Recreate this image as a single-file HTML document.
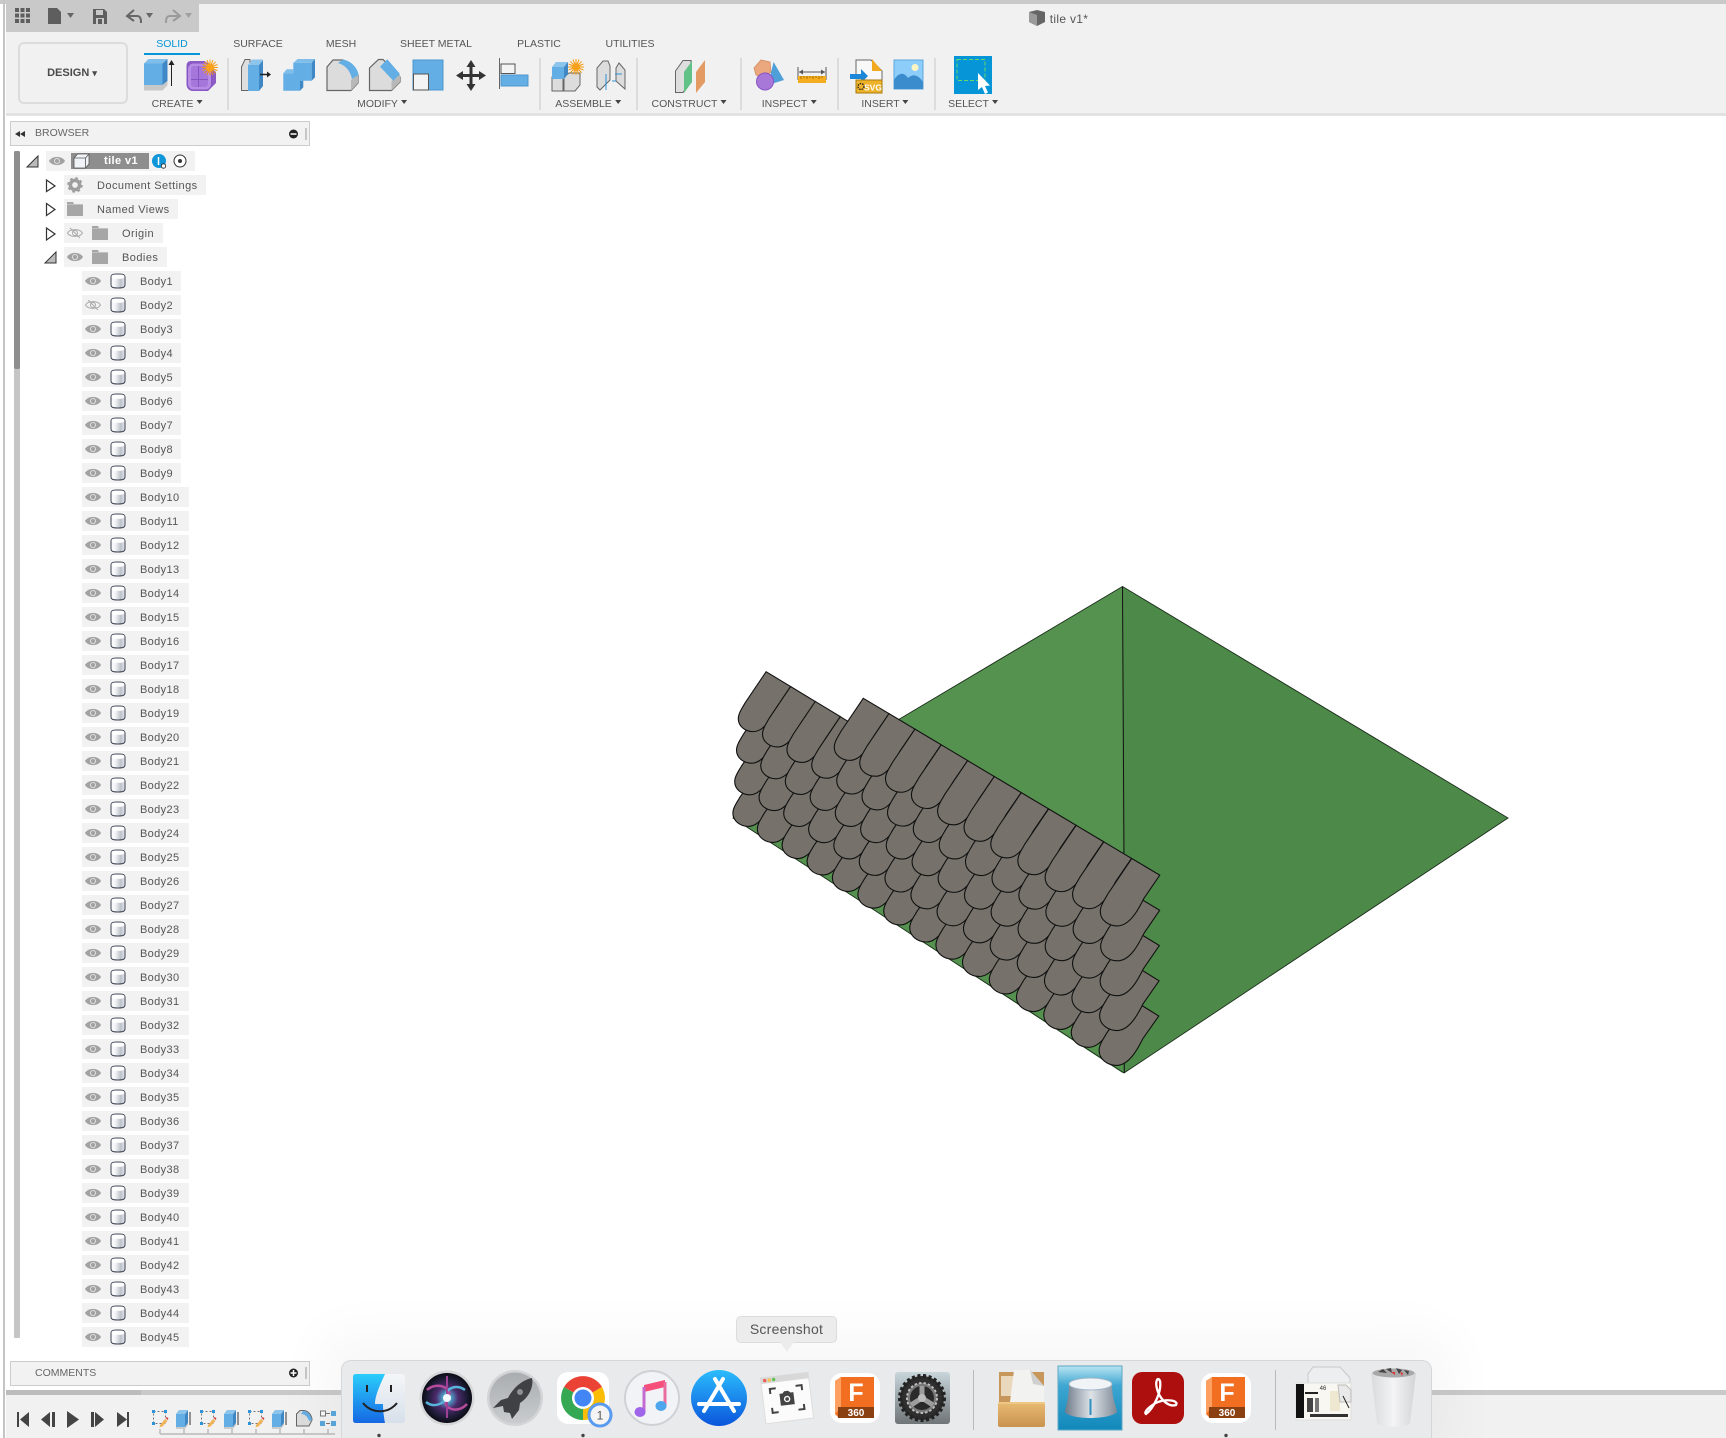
<!DOCTYPE html>
<html><head><meta charset="utf-8"><title>tile v1</title>
<style>
html,body{margin:0;padding:0;background:#fff;width:1726px;height:1438px;overflow:hidden;font-family:"Liberation Sans",sans-serif;color:#555}
#p{position:absolute;left:0;top:0;width:1726px;height:1438px;overflow:hidden}
.a{position:absolute}
svg{display:block}
.t{position:absolute;font-size:11px;line-height:14px;transform:translateX(-50%);white-space:nowrap;color:#555}
.lb{position:absolute;font-size:10.5px;line-height:14px;top:97px;transform:translateX(-50%);white-space:nowrap;color:#555}
.lb:after{content:"";display:inline-block;margin-left:3px;border:3px solid transparent;border-top:4px solid #444;border-bottom:0;vertical-align:3px}
.tr{position:absolute;background:#f2f2f2;height:20px;line-height:20px;font-size:11px;letter-spacing:.45px;color:#555;white-space:nowrap}
.tr span{top:1px}
.rows{position:absolute;left:82px;top:271px}
.rows p{position:relative;margin:0 0 4px;height:20px;width:99px;background:#f2f2f2;font-size:11px;line-height:20px;letter-spacing:.35px;padding-left:0;color:#555}
.rows p.w{width:107px}
.rows p span{position:absolute;left:58px;top:.5px}
.rows svg{position:absolute}
.rows .e{left:3px;top:5px}
.rows .c{left:28px;top:2px}
</style></head><body><div id="p">

<!-- toolbar background -->
<div class="a" style="left:0;top:0;width:1726px;height:4px;background:#c9c9c9"></div>
<div class="a" style="left:3px;top:0;width:2px;height:1438px;background:#c4c4c4"></div>
<div class="a" style="left:6px;top:4px;width:1720px;height:109px;background:#f1f1f1;border-bottom:3px solid #e2e2e2"></div>
<div class="a" style="left:6px;top:4px;width:193px;height:28px;background:#c9c9c9"></div>
<div class="a" style="left:199px;top:4px;width:20px;height:28px;background:#f1f1f1;border-top-left-radius:7px"></div>

<div class="a" style="left:18px;top:42px;width:106px;height:58px;border:2px solid #dcdcdc;border-radius:6px"></div>
<div class="t" style="left:72px;top:66px;font-weight:bold;font-size:11px;color:#4a4a4a">DESIGN&nbsp;<span style="font-size:9px">▾</span></div>

<div class="t" style="left:172px;top:36.500px;color:#0696d7;font-size:10.5px">SOLID</div>
<div class="a" style="left:144px;top:53px;width:56px;height:2px;background:#0696d7"></div>
<div class="t" style="left:258px;top:36.500px;font-size:10.5px">SURFACE</div>
<div class="t" style="left:341px;top:36.500px;font-size:10.5px">MESH</div>
<div class="t" style="left:436px;top:36.500px;font-size:10.5px">SHEET METAL</div>
<div class="t" style="left:539px;top:36.500px;font-size:10.5px">PLASTIC</div>
<div class="t" style="left:630px;top:36.500px;font-size:10.5px">UTILITIES</div>

<div class="lb" style="left:177px">CREATE</div>
<div class="lb" style="left:382px">MODIFY</div>
<div class="lb" style="left:588px">ASSEMBLE</div>
<div class="lb" style="left:689px">CONSTRUCT</div>
<div class="lb" style="left:789px">INSPECT</div>
<div class="lb" style="left:885px">INSERT</div>
<div class="lb" style="left:973px">SELECT</div>

<div class="t" style="left:1069px;top:11.500px;font-size:12px;letter-spacing:.3px;color:#555">tile v1*</div>

<!-- main drawing layer -->
<svg class="a" style="left:0;top:0" width="1726" height="1438" viewBox="0 0 1726 1438">
<defs>
<path id="sh" d="M0 0L28 16.700 12 40C8 48-1 67.400-14.600 67.400-23 67.400-31.500 62-31.500 53-31.500 47-27 41-24 35.500Z" fill="#76726b" stroke="#111" stroke-width="1.100" vector-effect="non-scaling-stroke"/>
<g id="ra">
<use href="#sh" transform="translate(863.3 698.3) scale(.921)"/>
<use href="#sh" transform="translate(889 713.6) scale(.929)"/>
<use href="#sh" transform="translate(915 729.1) scale(.937)"/>
<use href="#sh" transform="translate(941.2 744.8) scale(.945)"/>
<use href="#sh" transform="translate(967.6 760.6) scale(.953)"/>
<use href="#sh" transform="translate(994.3 776.5) scale(.961)"/>
<use href="#sh" transform="translate(1021.3 792.6) scale(.969)"/>
<use href="#sh" transform="translate(1048.6 808.9) scale(.976)"/>
<use href="#sh" transform="translate(1076.1 825.3) scale(.984)"/>
<use href="#sh" transform="translate(1103.8 841.8) scale(.992)"/>
<use href="#sh" transform="translate(1131.8 858.5)"/>
</g>
<g id="rb">
<use href="#sh" transform="translate(763.1 638.5) scale(.89)"/>
<use href="#sh" transform="translate(787.75 653.2) scale(.898)"/>
<use href="#sh" transform="translate(812.65 668) scale(.906)"/>
<use href="#sh" transform="translate(837.85 683.1) scale(.914)"/>
<use href="#ra"/>
</g>
<linearGradient id="cylg" x1="0" x2="1" y1="0" y2="0"><stop offset="0" stop-color="#fdfdfe"/><stop offset=".3" stop-color="#f4f5f7"/><stop offset=".7" stop-color="#bcc1ca"/><stop offset="1" stop-color="#e6e8ec"/></linearGradient>
<g id="star"><g stroke="#f59a0c" stroke-width="1"><path d="M-8 0H8M0-8V8M-5.700-5.700 5.700 5.700M-5.700 5.700 5.700-5.700M-7.400-3 7.400 3M-7.400 3 7.400-3M-3-7.400 3 7.400M3-7.400-3 7.400"/></g><circle r="4" fill="#f9a11b"/></g>
<g id="folder"><path d="M0 1H6L7 3H16V15H0Z" fill="#a6a6a6"/><path d="M0 3.500H16" stroke="#c8c8c8" stroke-width=".8"/></g>
<g id="teye"><path d="M0 5C3-.5 13-.5 16 5 13 10.500 3 10.500 0 5Z" fill="#a2a2a2"/><circle cx="8" cy="5" r="3" fill="#e4e4e4"/><circle cx="8" cy="5" r="2.100" fill="#a2a2a2"/></g>
<g id="sk"><rect x="1.500" y="1.500" width="12" height="12" fill="none" stroke="#777" stroke-dasharray="2 2"/><path d="M0 0h3v3h-3zM12 0h3v3h-3zM0 12h3v3h-3z" fill="#2d94d9"/><path d="M8 15l5-6 2.500 2-5 5.500-3 .8z" fill="#f1b35a"/><path d="M13.500 8l2 2 1-1.400-1.600-1.600z" fill="#d6423a"/></g>
<g id="ext"><path d="M0 4H9V17H0Z" fill="#62aee5"/><path d="M9 4 12 0V13L9 17Z" fill="#3f88c5"/><path d="M0 4 3 0H12L9 4Z" fill="#8cc4ec"/><path d="M0 17H9L12 13V15L9 19H0Z" fill="#ccc"/><path d="M14 2V15" stroke="#333" stroke-width="1"/></g>
<g id="f360">
<rect x="0" y="0" width="50" height="50" rx="12" fill="#fff"/>
<path d="M5 8 11 4H44V45H9L5 41Z" fill="#f26f22"/>
<path d="M5 8 11 4V34L5 41Z" fill="#ffa063"/>
<path d="M8 34H44V45H8Z" fill="#8a4011"/>
<text x="26" y="28" font-family="Liberation Sans" font-weight="bold" font-size="25" fill="#fff" text-anchor="middle">F</text>
<text x="26" y="43" font-family="Liberation Sans" font-weight="bold" font-size="10" fill="#fff" text-anchor="middle">360</text>
</g>
<linearGradient id="fb" x1="0" x2="0" y1="0" y2="1"><stop offset="0" stop-color="#2bcdfb"/><stop offset="1" stop-color="#1668e3"/></linearGradient>
<linearGradient id="fw" x1="0" x2="0" y1="0" y2="1"><stop offset="0" stop-color="#f4f6f8"/><stop offset="1" stop-color="#d6e0ea"/></linearGradient>
<radialGradient id="siri"><stop offset="0" stop-color="#cfeefa"/><stop offset=".15" stop-color="#4ea8cf"/><stop offset=".45" stop-color="#4c2a6c"/><stop offset=".8" stop-color="#1b1b33"/><stop offset="1" stop-color="#0b0b15"/></radialGradient>
<linearGradient id="lp" x1="0" x2="0" y1="0" y2="1"><stop offset="0" stop-color="#a9adb0"/><stop offset="1" stop-color="#c9cccd"/></linearGradient>
<linearGradient id="app" x1="0" x2="0" y1="0" y2="1"><stop offset="0" stop-color="#2bbcfc"/><stop offset="1" stop-color="#0b55dc"/></linearGradient>
<linearGradient id="sys" x1="0" x2="0" y1="0" y2="1"><stop offset="0" stop-color="#c8d6dc"/><stop offset="1" stop-color="#6f7477"/></linearGradient>
<linearGradient id="blu" x1="0" x2="0" y1="0" y2="1"><stop offset="0" stop-color="#b8e4f2"/><stop offset=".3" stop-color="#3fa7d2"/><stop offset="1" stop-color="#1088bb"/></linearGradient>
<linearGradient id="kn" x1="0" x2="1" y1="0" y2="0"><stop offset="0" stop-color="#6f7b8a"/><stop offset=".5" stop-color="#dfe3e8"/><stop offset="1" stop-color="#7e8997"/></linearGradient>
<linearGradient id="tan" x1="0" x2="0" y1="0" y2="1"><stop offset="0" stop-color="#e9bb73"/><stop offset="1" stop-color="#c9934f"/></linearGradient>
<linearGradient id="trs" x1="0" x2="1" y1="0" y2="0"><stop offset="0" stop-color="#d8dadb"/><stop offset=".5" stop-color="#f4f4f5"/><stop offset="1" stop-color="#d2d4d6"/></linearGradient>
</defs>

<!-- 3D model -->
<path d="M1122.500 586.500 1508 818 1124 1073 733 818Z" fill="#4e8b4a"/>
<path d="M1122.500 586.500V1073L733 818Z" fill="#55924f"/>
<path d="M1124 845 1124 1073 1158 1050 1508 818 1122.500 586.500Z" fill="#4d8a49"/>
<path d="M1122.500 586.500 1508 818 1124 1073 733 818Z" fill="none" stroke="#1c2e1c" stroke-width=".9"/>
<path d="M1122.500 586.500 1124 860M1124.300 1060V1073" stroke="#111" stroke-width="1"/>
<use href="#rb" transform="matrix(1.0027 .0317 0 1 -4.16 104.11)"/>
<use href="#rb" transform="matrix(.9992 .0228 0 1 .21 79.2)"/>
<use href="#rb" transform="matrix(.99566 .01383 0 1 4.61 54.35)"/>
<use href="#rb" transform="matrix(.99214 .00488 0 1 9 29.48)"/>
<use href="#ra"/>

<!-- QAT icons -->
<path d="M15 8h4v4h-4zM20.500 8h4v4h-4zM26 8h4v4h-4zM15 13.500h4v4h-4zM20.500 13.500h4v4h-4zM26 13.500h4v4h-4zM15 19h4v4h-4zM20.500 19h4v4h-4zM26 19h4v4h-4z" fill="#5e5e5e"/>
<path d="M48 8H57L61 12V24H48Z" fill="#5e5e5e"/>
<path d="M67 13H74L70.500 18Z" fill="#666"/>
<path d="M93 9H104L107 12V24H93Z" fill="#5e5e5e"/><path d="M96 10H103V15H96ZM96 18H104V24H96Z" fill="#c9c9c9"/><path d="M98 19H102V24H98Z" fill="#5e5e5e"/>
<path d="M134 10 127 16 134 21M127 16H137C141 16 141 20 141 23" fill="none" stroke="#666" stroke-width="2"/>
<path d="M146 13H153L149.500 18Z" fill="#666"/>
<path d="M173 10 180 16 173 21M180 16H170C166 16 166 20 166 23" fill="none" stroke="#9a9a9a" stroke-width="2"/>
<path d="M185 13H192L188.500 18Z" fill="#a0a0a0"/>
<path d="M1029 12 1037 10 1045 12V22L1037 26 1029 22Z" fill="#666"/><path d="M1029 12 1037 15V26L1029 22Z" fill="#9a9a9a"/>

<!-- separators -->
<path d="M228 58V110M540 58V110M637 58V110M741 58V110M838 58V110M935 58V110" stroke="#dcdcdc" stroke-width="2"/>

<!-- Extrude -->
<path d="M144 63.500H162.500V85H144Z" fill="#62aee5"/><path d="M162.500 63.500 167.500 59V81L162.500 85Z" fill="#3f88c5"/><path d="M144 63.500 148.500 59H167.500L162.500 63.500Z" fill="#7fbdea"/><path d="M144 85H162.500L167.500 81V85L162.500 90.500H144Z" fill="#c8c8c8"/>
<path d="M171.500 86V62" stroke="#222" stroke-width="1"/><path d="M168.500 65 171.500 60 174.500 65Z" fill="#222"/>
<!-- Form -->
<path d="M191 61H205L216 72V83L208 91H193C189 91 186.500 88 186.500 84V66C186.500 63 188 61 191 61Z" fill="#8a5cc4"/>
<rect x="187.500" y="63" width="24" height="27" rx="6" fill="#b68ce4" stroke="#8654c5" stroke-width="1"/><rect x="191" y="66" width="17" height="21" rx="3" fill="#a577da"/><path d="M191 79.500H208M198.500 66V87" stroke="#8654c5" stroke-width="1"/>
<use href="#star" transform="translate(210 67.500)"/>
<!-- Press pull -->
<path d="M241.500 67 245 59.500H250V90.500H241.500Z" fill="#dedede" stroke="#666"/>
<path d="M248 65H259V91H248Z" fill="#62aee5"/><path d="M259 65 263 60V86L259 91Z" fill="#3f88c5"/><path d="M248 65 252 59.500H263L259 65Z" fill="#8cc4ec"/>
<path d="M260 74.500H268" stroke="#222" stroke-width="1.500"/><path d="M267 71.500 271 74.500 267 77.500Z" fill="#222"/>
<!-- Combine -->
<path d="M293.300 62.700H311.700V80.700H293.300Z" fill="#62aee5"/><path d="M283.300 73.300H300V90.700H283.300Z" fill="#62aee5"/>
<path d="M293.300 62.700 297.700 59H315L311.700 62.700Z" fill="#7fbdea"/><path d="M311.700 62.700 315 59V77.300L311.700 80.700Z" fill="#3f88c5"/>
<path d="M283.300 73.300 286.700 69.300H293.300V73.300Z" fill="#7fbdea"/><path d="M300 90.700 303.300 87.300V80.700H300Z" fill="#3f88c5"/>
<!-- Fillet -->
<path d="M327 90.500V67L333 60H343L358 75V83L351 90.500Z" fill="#dcdcdc" stroke="#666" stroke-width="1.200"/>
<path d="M351 90.500V80L358 75V83Z" fill="#b8b8b8"/>
<path d="M338 63 343 59.500C352 61 358 69 358.500 75L352 79C350 70 345 65 338 63Z" fill="#62aee5"/>
<!-- Chamfer -->
<path d="M369.500 90.500V68L378.500 59.500H383L400 77V82L391.500 90.500Z" fill="#dcdcdc" stroke="#666" stroke-width="1.200"/>
<path d="M391.500 90.500V81L400 75V82Z" fill="#b8b8b8"/>
<path d="M380 66.700 387.300 59.300 400 74 393.300 80.700Z" fill="#62aee5"/>
<!-- Shell -->
<rect x="413" y="60" width="30" height="30" fill="#62aee5" stroke="#4e97d0"/><rect x="413.500" y="74" width="15" height="16" fill="#f4f4f4" stroke="#555"/>
<!-- Move -->
<path d="M471 60 475.500 67H472.500V74H479V71L486 75.500 479 80V77H472.500V84H475.500L471 91 466.500 84H469.500V77H463V80L456 75.500 463 71V74H469.500V67H466.500Z" fill="#333"/>
<!-- Align -->
<path d="M499.500 58V89" stroke="#666"/><rect x="501" y="64" width="14" height="9.500" fill="#f4f4f4" stroke="#555"/><rect x="501" y="75" width="27" height="11" fill="#62aee5" stroke="#4e97d0"/>
<!-- New component -->
<path d="M552 77V91H563V77ZM564 77V91H575L580 85V73H569Z" fill="#dcdcdc" stroke="#666"/>
<path d="M552 67H564V79H552Z" fill="#62aee5"/><path d="M552 67 556 62H568L564 67Z" fill="#8cc4ec"/><path d="M564 67 568 62V74L564 79Z" fill="#3f88c5"/>
<use href="#star" transform="translate(576 67)"/>
<!-- Joint -->
<path d="M597 87V68L603 61H608L610 66V80L600 90Z" fill="#dcdcdc" stroke="#666"/>
<path d="M619 63 625 70V89L616 81V68Z" fill="#dcdcdc" stroke="#666"/>
<path d="M606 74V90M612 81H616" stroke="#2d94d9" stroke-width="1"/><path d="M615 74H622" stroke="#2d94d9"/>
<!-- Construct -->
<path d="M675.500 71 683 60.500H691V81L683 92.500H675.500Z" fill="#dedede" stroke="#666"/>
<path d="M684 72 692 61V82L684 93Z" fill="#62c186"/>
<path d="M696 72 705 60V82L696 93Z" fill="#e39a63"/>
<!-- Inspect -->
<path d="M754 68 761 60 770 62 771 72 764 77 756 75Z" fill="#eba77e" stroke="#d18c60" stroke-width=".8"/>
<path d="M773.600 62 784 80 768 85Z" fill="#4f9fd8"/>
<circle cx="765" cy="81.500" r="8.500" fill="#a878d8" stroke="#8654c5"/>
<!-- Measure -->
<path d="M798 67V80M826 67V80" stroke="#555"/><path d="M799 72H825" stroke="#555"/><path d="M799 72 803 69.500V74.500ZM825 72 821 69.500V74.500Z" fill="#555"/>
<rect x="798" y="76" width="28" height="7" fill="#f4ad1e"/><path d="M801 76v3M804 76v2M807 76v3M810 76v2M813 76v3M816 76v2M819 76v3M822 76v2" stroke="#8a5a00" stroke-width=".7"/>
<!-- Insert svg -->
<path d="M856 76V60H871L882 71V82" fill="#f8f8f8" stroke="#666"/><path d="M872 59 882 71H872Z" fill="#f2a91f"/>
<path d="M850 74H861V69L868 76 861 83V79H850Z" fill="#1c86d8"/>
<rect x="856" y="80" width="26" height="13" fill="#eeb12a" stroke="#a77a10"/>
<text x="873" y="90.500" font-family="Liberation Sans" font-weight="bold" font-size="8.500" fill="#fff" text-anchor="middle">SVG</text>
<circle cx="861" cy="86.500" r="3" fill="none" stroke="#222" stroke-width="1.300" stroke-dasharray="1.500 1"/>
<!-- Insert image -->
<rect x="894" y="60" width="29" height="29" fill="#8ccdfa" stroke="#5ba8de"/><path d="M894 89V80C899 72 904 72 908 78 912 74 918 74 923 82V89Z" fill="#3a8ccd"/><circle cx="915" cy="67.500" r="3.500" fill="#fdf5c4"/>
<!-- Select -->
<rect x="954" y="56" width="38" height="38" fill="#0696d7"/><rect x="957" y="59.500" width="28" height="21" fill="none" stroke="#64d86c" stroke-width="1" stroke-dasharray="4 2"/>
<path d="M978 73 978 90 982 87 985 94 988 92.500 985 86 990 85.500Z" fill="#fff"/>

<!-- browser panel glyphs -->
<rect x="10.500" y="121.500" width="299" height="24" fill="#f2f2f2" stroke="#ccc"/>
<path d="M20 131 15 134 20 137ZM25 131 20 134 25 137Z" fill="#333"/>
<circle cx="293.500" cy="134" r="4.500" fill="#222"/><path d="M290.500 134H296.500" stroke="#fff" stroke-width="1.500"/>
<path d="M306 128V140" stroke="#999" stroke-width="1"/>
<!-- scrollbar -->
<rect x="14" y="151" width="6" height="1187" rx="1" fill="#c6c6c6"/><rect x="14" y="151" width="6" height="218" rx="2" fill="#8e8e8e"/>

<!-- tree triangles -->
<path d="M27 167 38 156V167Z" fill="#bbb" stroke="#333"/>
<path d="M46.500 180 55 186 46.500 191.500Z M46.500 203.500 55 209.500 46.500 215.500Z M46.500 228 55 234 46.500 240Z" fill="#fff" stroke="#333" stroke-width="1.200"/>
<path d="M45 263 56 252V263Z" fill="#bbb" stroke="#333"/>

<!-- comments -->
<rect x="10.500" y="1361.500" width="299" height="24" fill="#f2f2f2" stroke="#ccc"/>
<circle cx="293.500" cy="1373" r="4.500" fill="#222"/><path d="M290.500 1373H296.500M293.500 1370V1376" stroke="#fff" stroke-width="1.500"/>
<path d="M306 1367V1379" stroke="#999" stroke-width="1"/>

<!-- timeline -->
<rect x="6" y="1390" width="1720" height="5" fill="#c9c9c9"/>
<rect x="6" y="1395" width="1720" height="43" fill="#f1f1f1"/>
<rect x="6" y="1390" width="135" height="5" fill="#bcbcbc"/>
<g fill="#444">
<path d="M17 1412h2v15h-2zM29 1412V1427L20 1419.500Z"/>
<path d="M50 1412V1427L41 1419.500ZM52 1412h3v15h-3z"/>
<path d="M67 1411V1428L79 1419.500Z"/>
<path d="M91 1412h3v15h-3zM95 1412V1427L104 1419.500Z"/>
<path d="M117 1412V1427L127 1419.500ZM127 1412h2v15h-2z"/>
</g>
<use href="#sk" transform="translate(152 1410)"/>
<use href="#ext" transform="translate(176 1410)"/>
<use href="#sk" transform="translate(200 1410)"/>
<use href="#ext" transform="translate(224 1410)"/>
<use href="#sk" transform="translate(248 1410)"/>
<use href="#ext" transform="translate(272 1410)"/>
<path d="M296.500 1426V1414L300 1410.500H304C309 1411 312 1416 312 1420L309 1426Z" fill="#dcdcdc" stroke="#666"/><path d="M303 1411C308 1411 311.500 1416 312 1420L309 1421C308 1417 305 1414 301 1414Z" fill="#62aee5"/>
<path d="M320.500 1411h5v5h-5z" fill="#f8f8f8" stroke="#777"/><path d="M331 1411h5v5h-5zM320 1421h5v5h-5zM331 1421h5v5h-5z" fill="#5aa7dd"/><path d="M326 1413.500h4M326 1423.500h4" stroke="#777"/>
<path d="M160 1434H335M160 1429V1434M184 1429V1434M208 1429V1434M232 1429V1434M256 1429V1434M280 1429V1434M304 1429V1434M328 1429V1434" stroke="#bbb" stroke-width="1.500" fill="none"/>
</svg>

<div class="a" style="left:35px;top:126px;font-size:10.5px;line-height:14px;color:#666">BROWSER</div>
<div class="a" style="left:35px;top:1366px;font-size:10.5px;line-height:14px;color:#666">COMMENTS</div>

<!-- tree -->
<div class="tr" style="left:46px;top:151px;width:149px"></div>
<div class="a" style="left:71px;top:153px;width:78px;height:16px;background:#8e8e8e"></div>
<svg class="a" style="left:49px;top:156px" width="16" height="10"><use href="#teye"/></svg>
<svg class="a" style="left:73px;top:153px" width="18" height="16"><path d="M1 5 4.500 1H16V11L12.500 15H1Z" fill="#f0f3f7" stroke="#555" stroke-width=".8"/><path d="M12.500 5V15M1 5H12.500L16 1" fill="none" stroke="#555" stroke-width=".8"/></svg>
<div class="a" style="left:104px;top:153px;line-height:16px;font-size:11px;font-weight:bold;color:#fff;letter-spacing:.4px">tile v1</div>
<svg class="a" style="left:150px;top:152px" width="40" height="18"><circle cx="9" cy="9" r="7" fill="#0f96d8"/><path d="M8.500 5V13" stroke="#fff" stroke-width="1.500"/><circle cx="13.500" cy="14" r="2.200" fill="#fff" stroke="#222" stroke-width=".8"/><circle cx="30" cy="9" r="6" fill="#fff" stroke="#333"/><circle cx="30" cy="9" r="2" fill="#333"/></svg>

<div class="tr" style="left:64px;top:175px;width:142px"><span style="position:absolute;left:33px">Document Settings</span></div>
<svg class="a" style="left:67px;top:177px" width="16" height="16"><circle cx="8" cy="8" r="4.600" fill="none" stroke="#9e9e9e" stroke-width="3.500"/><circle cx="8" cy="8" r="6.500" fill="none" stroke="#9e9e9e" stroke-width="2.500" stroke-dasharray="2.550 2.550"/></svg>
<div class="tr" style="left:64px;top:199px;width:114px"><span style="position:absolute;left:33px">Named Views</span></div>
<svg class="a" style="left:67px;top:201px" width="16" height="16"><use href="#folder"/></svg>
<div class="tr" style="left:64px;top:223px;width:99px"><span style="position:absolute;left:58px">Origin</span></div>
<svg class="a" style="left:67px;top:227px" width="16" height="12"><path d="M.5 6C3 1.500 13 1.500 15.500 6 13 10.500 3 10.500 .5 6Z" fill="none" stroke="#aaa"/><circle cx="8" cy="6" r="2.500" fill="none" stroke="#aaa"/><path d="M3 1 13 11" stroke="#aaa"/></svg>
<svg class="a" style="left:92px;top:225px" width="16" height="16"><use href="#folder"/></svg>
<div class="tr" style="left:64px;top:247px;width:103px"><span style="position:absolute;left:58px">Bodies</span></div>
<svg class="a" style="left:67px;top:252px" width="16" height="10"><use href="#teye"/></svg>
<svg class="a" style="left:92px;top:249px" width="16" height="16"><use href="#folder"/></svg>

<svg width="0" height="0" style="position:absolute"><defs>
<g id="bc"><path d="M1 4.500C1 1.500 3 1 8 1S15 1.500 15 4.500V11.500C15 14.500 13 15 8 15S1 14.500 1 11.500Z" fill="url(#cylg)" stroke="#3d4450" stroke-width="1"/><path d="M1.500 3.500C1.500 1.800 3.500 1.500 8 1.500S14.500 1.800 14.500 3.500C14.500 5.500 12 5.800 8 5.800S1.500 5.500 1.500 3.500Z" fill="#fff"/></g>
<g id="boff"><path d="M.5 5C3 .500 13 .500 15.500 5 13 9.500 3 9.500 .5 5Z" fill="none" stroke="#aaa"/><circle cx="8" cy="5" r="2.500" fill="none" stroke="#aaa"/><path d="M3 0 13 10" stroke="#aaa"/></g>
</defs></svg>

<div class="rows">
<p><svg class="e" width="16" height="10"><use href="#teye"/></svg><svg class="c" width="16" height="16"><use href="#bc"/></svg><span>Body1</span></p>
<p><svg class="e" width="16" height="10"><use href="#boff"/></svg><svg class="c" width="16" height="16"><use href="#bc"/></svg><span>Body2</span></p>
<p><svg class="e" width="16" height="10"><use href="#teye"/></svg><svg class="c" width="16" height="16"><use href="#bc"/></svg><span>Body3</span></p>
<p><svg class="e" width="16" height="10"><use href="#teye"/></svg><svg class="c" width="16" height="16"><use href="#bc"/></svg><span>Body4</span></p>
<p><svg class="e" width="16" height="10"><use href="#teye"/></svg><svg class="c" width="16" height="16"><use href="#bc"/></svg><span>Body5</span></p>
<p><svg class="e" width="16" height="10"><use href="#teye"/></svg><svg class="c" width="16" height="16"><use href="#bc"/></svg><span>Body6</span></p>
<p><svg class="e" width="16" height="10"><use href="#teye"/></svg><svg class="c" width="16" height="16"><use href="#bc"/></svg><span>Body7</span></p>
<p><svg class="e" width="16" height="10"><use href="#teye"/></svg><svg class="c" width="16" height="16"><use href="#bc"/></svg><span>Body8</span></p>
<p><svg class="e" width="16" height="10"><use href="#teye"/></svg><svg class="c" width="16" height="16"><use href="#bc"/></svg><span>Body9</span></p>
<p class="w"><svg class="e" width="16" height="10"><use href="#teye"/></svg><svg class="c" width="16" height="16"><use href="#bc"/></svg><span>Body10</span></p>
<p class="w"><svg class="e" width="16" height="10"><use href="#teye"/></svg><svg class="c" width="16" height="16"><use href="#bc"/></svg><span>Body11</span></p>
<p class="w"><svg class="e" width="16" height="10"><use href="#teye"/></svg><svg class="c" width="16" height="16"><use href="#bc"/></svg><span>Body12</span></p>
<p class="w"><svg class="e" width="16" height="10"><use href="#teye"/></svg><svg class="c" width="16" height="16"><use href="#bc"/></svg><span>Body13</span></p>
<p class="w"><svg class="e" width="16" height="10"><use href="#teye"/></svg><svg class="c" width="16" height="16"><use href="#bc"/></svg><span>Body14</span></p>
<p class="w"><svg class="e" width="16" height="10"><use href="#teye"/></svg><svg class="c" width="16" height="16"><use href="#bc"/></svg><span>Body15</span></p>
<p class="w"><svg class="e" width="16" height="10"><use href="#teye"/></svg><svg class="c" width="16" height="16"><use href="#bc"/></svg><span>Body16</span></p>
<p class="w"><svg class="e" width="16" height="10"><use href="#teye"/></svg><svg class="c" width="16" height="16"><use href="#bc"/></svg><span>Body17</span></p>
<p class="w"><svg class="e" width="16" height="10"><use href="#teye"/></svg><svg class="c" width="16" height="16"><use href="#bc"/></svg><span>Body18</span></p>
<p class="w"><svg class="e" width="16" height="10"><use href="#teye"/></svg><svg class="c" width="16" height="16"><use href="#bc"/></svg><span>Body19</span></p>
<p class="w"><svg class="e" width="16" height="10"><use href="#teye"/></svg><svg class="c" width="16" height="16"><use href="#bc"/></svg><span>Body20</span></p>
<p class="w"><svg class="e" width="16" height="10"><use href="#teye"/></svg><svg class="c" width="16" height="16"><use href="#bc"/></svg><span>Body21</span></p>
<p class="w"><svg class="e" width="16" height="10"><use href="#teye"/></svg><svg class="c" width="16" height="16"><use href="#bc"/></svg><span>Body22</span></p>
<p class="w"><svg class="e" width="16" height="10"><use href="#teye"/></svg><svg class="c" width="16" height="16"><use href="#bc"/></svg><span>Body23</span></p>
<p class="w"><svg class="e" width="16" height="10"><use href="#teye"/></svg><svg class="c" width="16" height="16"><use href="#bc"/></svg><span>Body24</span></p>
<p class="w"><svg class="e" width="16" height="10"><use href="#teye"/></svg><svg class="c" width="16" height="16"><use href="#bc"/></svg><span>Body25</span></p>
<p class="w"><svg class="e" width="16" height="10"><use href="#teye"/></svg><svg class="c" width="16" height="16"><use href="#bc"/></svg><span>Body26</span></p>
<p class="w"><svg class="e" width="16" height="10"><use href="#teye"/></svg><svg class="c" width="16" height="16"><use href="#bc"/></svg><span>Body27</span></p>
<p class="w"><svg class="e" width="16" height="10"><use href="#teye"/></svg><svg class="c" width="16" height="16"><use href="#bc"/></svg><span>Body28</span></p>
<p class="w"><svg class="e" width="16" height="10"><use href="#teye"/></svg><svg class="c" width="16" height="16"><use href="#bc"/></svg><span>Body29</span></p>
<p class="w"><svg class="e" width="16" height="10"><use href="#teye"/></svg><svg class="c" width="16" height="16"><use href="#bc"/></svg><span>Body30</span></p>
<p class="w"><svg class="e" width="16" height="10"><use href="#teye"/></svg><svg class="c" width="16" height="16"><use href="#bc"/></svg><span>Body31</span></p>
<p class="w"><svg class="e" width="16" height="10"><use href="#teye"/></svg><svg class="c" width="16" height="16"><use href="#bc"/></svg><span>Body32</span></p>
<p class="w"><svg class="e" width="16" height="10"><use href="#teye"/></svg><svg class="c" width="16" height="16"><use href="#bc"/></svg><span>Body33</span></p>
<p class="w"><svg class="e" width="16" height="10"><use href="#teye"/></svg><svg class="c" width="16" height="16"><use href="#bc"/></svg><span>Body34</span></p>
<p class="w"><svg class="e" width="16" height="10"><use href="#teye"/></svg><svg class="c" width="16" height="16"><use href="#bc"/></svg><span>Body35</span></p>
<p class="w"><svg class="e" width="16" height="10"><use href="#teye"/></svg><svg class="c" width="16" height="16"><use href="#bc"/></svg><span>Body36</span></p>
<p class="w"><svg class="e" width="16" height="10"><use href="#teye"/></svg><svg class="c" width="16" height="16"><use href="#bc"/></svg><span>Body37</span></p>
<p class="w"><svg class="e" width="16" height="10"><use href="#teye"/></svg><svg class="c" width="16" height="16"><use href="#bc"/></svg><span>Body38</span></p>
<p class="w"><svg class="e" width="16" height="10"><use href="#teye"/></svg><svg class="c" width="16" height="16"><use href="#bc"/></svg><span>Body39</span></p>
<p class="w"><svg class="e" width="16" height="10"><use href="#teye"/></svg><svg class="c" width="16" height="16"><use href="#bc"/></svg><span>Body40</span></p>
<p class="w"><svg class="e" width="16" height="10"><use href="#teye"/></svg><svg class="c" width="16" height="16"><use href="#bc"/></svg><span>Body41</span></p>
<p class="w"><svg class="e" width="16" height="10"><use href="#teye"/></svg><svg class="c" width="16" height="16"><use href="#bc"/></svg><span>Body42</span></p>
<p class="w"><svg class="e" width="16" height="10"><use href="#teye"/></svg><svg class="c" width="16" height="16"><use href="#bc"/></svg><span>Body43</span></p>
<p class="w"><svg class="e" width="16" height="10"><use href="#teye"/></svg><svg class="c" width="16" height="16"><use href="#bc"/></svg><span>Body44</span></p>
<p class="w"><svg class="e" width="16" height="10"><use href="#teye"/></svg><svg class="c" width="16" height="16"><use href="#bc"/></svg><span>Body45</span></p>
</div>

<!-- Dock -->
<div class="a" style="left:341px;top:1360px;width:1089px;height:80px;background:#e9eaeb;border:1px solid #d6d7d8;border-bottom:0;border-radius:10px 10px 0 0;box-shadow:0 -6px 50px 24px rgba(0,0,0,.03)"></div>
<div class="a" style="left:736px;top:1316px;width:99px;height:25px;background:#ececed;border:1px solid #dcdcdc;border-radius:5px;font-size:14px;line-height:25px;text-align:center;color:#555;letter-spacing:.25px">Screenshot</div>
<svg class="a" style="left:0;top:1300px" width="1726" height="138" viewBox="0 1300 1726 138">
<path d="M780 1342H794L787 1352Z" fill="#ececed"/>
<!-- Finder -->
<rect x="353" y="1374" width="52" height="49" rx="3" fill="url(#fw)"/>
<path d="M353 1377C353 1375 354 1374 356 1374H385C380 1385 375 1395 375 1404H383C383 1410 384 1418 385 1423H356C354 1423 353 1422 353 1420Z" fill="url(#fb)"/>
<path d="M367 1385V1392M391 1385V1392" stroke="#222" stroke-width="2"/>
<path d="M363 1403C372 1414 388 1414 397 1403" fill="none" stroke="#222" stroke-width="2"/>
<!-- Siri -->
<circle cx="447" cy="1398" r="27.500" fill="#d5d6d8"/><circle cx="447" cy="1398" r="25" fill="url(#siri)"/>
<path d="M427 1390C438 1380 456 1390 447 1398 440 1406 456 1416 467 1404" fill="none" stroke="#b84c9c" stroke-width="2.500"/>
<path d="M426 1402C438 1412 452 1394 447 1398 442 1392 454 1382 465 1390" fill="none" stroke="#59b4da" stroke-width="2.500"/>
<path d="M447 1376V1418" stroke="#9c4395" stroke-width="2"/>
<circle cx="447" cy="1398" r="4" fill="#f4fbff"/>
<!-- Launchpad -->
<circle cx="515" cy="1398" r="28" fill="#d3d4d5"/><circle cx="515" cy="1398" r="25.500" fill="url(#lp)"/>
<path d="M532 1378C522 1380 513 1388 508 1398L501 1400 493 1408 503 1406 504 1412 510 1413 512 1419 519 1410 520 1403C528 1398 534 1388 532 1378Z" fill="#3f4144"/>
<circle cx="520" cy="1392" r="3" fill="#8e9092"/>
<!-- Chrome -->
<rect x="557" y="1372" width="52" height="52" rx="11" fill="#fff"/>
<path d="M583 1398 564 1387A22 22 0 0 1 602 1387Z" fill="#ea4335"/>
<path d="M583 1398 602 1387A22 22 0 0 1 583 1420Z" fill="#fbbc05"/>
<path d="M583 1398 583 1420A22 22 0 0 1 564 1387Z" fill="#34a853"/>
<circle cx="583" cy="1398" r="11" fill="#fff"/><circle cx="583" cy="1398" r="8.500" fill="#4285f4"/>
<circle cx="600" cy="1415" r="11" fill="#f4f4f4" stroke="#5a9bf0" stroke-width="3"/>
<text x="600" y="1419.500" font-family="Liberation Sans" font-size="12" fill="#555" text-anchor="middle">1</text>
<!-- Music -->
<circle cx="652" cy="1398" r="27" fill="#f2f3f6" stroke="#cfd1d4" stroke-width="2"/>
<path d="M644 1385 665 1380V1387L644 1392Z" fill="#f6507a"/>
<path d="M644 1387V1412" stroke="#c46bd0" stroke-width="3"/><path d="M665 1382V1406" stroke="#e86ea0" stroke-width="3"/>
<ellipse cx="640" cy="1412" rx="5.500" ry="5" fill="#a066ea"/><ellipse cx="661" cy="1406" rx="5.500" ry="5" fill="#4da6ee"/>
<!-- App Store -->
<circle cx="719" cy="1398" r="28" fill="url(#app)"/>
<path d="M704 1411 723 1379M734 1411 715 1379M699 1404H739" stroke="#fff" stroke-width="4" stroke-linecap="round" fill="none"/>
<!-- Screenshot -->
<g transform="rotate(-7 787 1398)"><rect x="763" y="1375" width="48" height="46" fill="#fbfbfb" stroke="#ddd"/><rect x="763" y="1375" width="48" height="6" fill="#d8d8d8"/><circle cx="767" cy="1378" r="1.700" fill="#ee5c54"/><circle cx="771.500" cy="1378" r="1.700" fill="#f4bf4f"/><circle cx="776" cy="1378" r="1.700" fill="#5fc454"/>
<path d="M771 1392V1387H777M797 1387H803V1392M803 1406V1411H797M777 1411H771V1406" fill="none" stroke="#444" stroke-width="2"/>
<path d="M780 1393H783L785 1391H789L791 1393H794V1405H780Z" fill="#444"/><circle cx="787" cy="1399" r="3.200" fill="#fbfbfb"/><circle cx="787" cy="1399" r="1.800" fill="#444"/></g>
<!-- F360 -->
<use href="#f360" transform="translate(830 1373)"/>
<!-- System prefs -->
<rect x="895" y="1372" width="55" height="52" rx="3" fill="url(#sys)"/>
<circle cx="922" cy="1398" r="22" fill="#2b2b2b" stroke="#222" stroke-width="4" stroke-dasharray="3 2.500"/>
<circle cx="922" cy="1398" r="19" fill="#2f2f2f"/>
<circle cx="922" cy="1398" r="15" fill="#777" stroke="#bcbcbc" stroke-width="2" stroke-dasharray="2.500 2"/>
<circle cx="922" cy="1398" r="12" fill="#2a2a2a"/>
<path d="M922 1398V1386M922 1398 911 1405M922 1398 933 1405" stroke="#9d9d9d" stroke-width="5"/>
<circle cx="922" cy="1398" r="4" fill="#bdbdbd"/>
<!-- Archive -->
<rect x="999" y="1372" width="45" height="31" fill="#c7965a"/><rect x="1001" y="1376" width="14" height="20" fill="#ead8bd"/>
<path d="M1014 1370H1030L1044 1386V1402H1010Z" fill="#f2f2f0"/><path d="M1030 1370 1033 1384 1044 1386Z" fill="#cfcfcf"/>
<rect x="998" y="1402" width="47" height="25" rx="2" fill="url(#tan)"/><path d="M998 1403H1045" stroke="#f5d69e"/>
<!-- Blue app -->
<rect x="1058" y="1366" width="64" height="64" fill="url(#blu)" stroke="#5da8c6"/>
<path d="M1069 1384C1069 1400 1065 1408 1065 1412 1070 1420 1110 1420 1117 1412 1117 1408 1112 1400 1112 1384Z" fill="url(#kn)"/>
<ellipse cx="1090.500" cy="1384" rx="21.500" ry="6" fill="#f1f4f7" stroke="#9fb5c7"/>
<path d="M1090.500 1399V1415" stroke="#2c8fbf" stroke-width="2"/>
<!-- Adobe -->
<rect x="1132" y="1372" width="52" height="52" rx="10" fill="#ad0f0f"/>
<path d="M1146 1414C1153 1409 1162 1392 1160 1381 1158 1376 1154 1381 1158 1392 1162 1402 1170 1407 1176 1405 1179 1400 1166 1399 1158 1402 1151 1405 1143 1412 1146 1414Z" fill="none" stroke="#fff" stroke-width="2.300"/>
<!-- F360 2 -->
<use href="#f360" transform="translate(1201 1373)"/>
<!-- Doc thumb -->
<path d="M1308 1374 1313 1367H1340L1350 1378V1390H1308Z" fill="#eceef0" stroke="#c9c9c9"/>
<rect x="1296" y="1383" width="55" height="37" fill="#f8f7f2" stroke="#ddd"/>
<path d="M1296 1384H1304V1418H1296Z" fill="#111"/><rect x="1305" y="1392" width="13" height="2" fill="#222"/><rect x="1307" y="1398" width="6" height="14" fill="#444"/><rect x="1315" y="1398" width="4" height="14" fill="#777"/>
<rect x="1310" y="1414" width="38" height="3" fill="#333"/><rect x="1330" y="1391" width="10" height="20" fill="#eee8d0"/>
<text x="1323" y="1390" font-family="Liberation Sans" font-size="6" fill="#333" text-anchor="middle">46</text>
<path d="M1338 1385H1346L1351 1390V1402H1340Z" fill="#e9e9e9" stroke="#bbb"/><path d="M1343 1396 1349 1408" stroke="#222"/>
<!-- Trash -->
<path d="M1371 1373C1380 1369 1407 1369 1416 1373L1410 1423C1405 1428 1382 1428 1377 1423Z" fill="url(#trs)"/>
<ellipse cx="1393.500" cy="1373" rx="21" ry="4.500" fill="#a8a8a8"/>
<path d="M1378 1372l5-3 4 4zM1386 1369l5-1 1 5zM1396 1368l6 2-3 4zM1404 1370l5 1-1 4z" fill="#444"/><path d="M1391 1372l4 0 0 3zM1400 1372l3 1-1 3z" fill="#d33"/>
<!-- separators and dots -->
<path d="M973.500 1370V1430M1275.500 1370V1430" stroke="#b9babc" stroke-width="1"/>
<circle cx="379" cy="1435.500" r="1.700" fill="#444"/><circle cx="583" cy="1435.500" r="1.700" fill="#444"/><circle cx="1226" cy="1435.500" r="1.700" fill="#444"/>
</svg>
</div></body></html>
